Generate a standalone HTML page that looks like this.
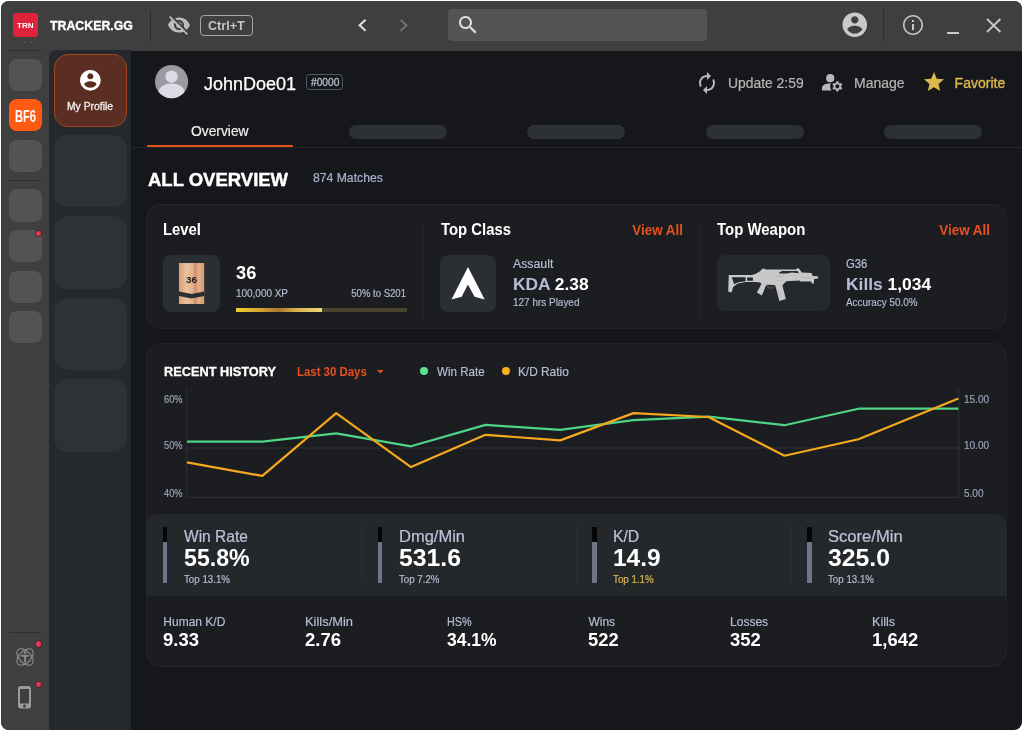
<!DOCTYPE html>
<html lang="en"><head><meta charset="utf-8"><title>Tracker.gg</title>
<style>
html,body{margin:0;padding:0;background:#fff;}
body{width:1023px;height:731px;position:relative;overflow:hidden;font-family:"Liberation Sans",sans-serif;}
#win{position:absolute;left:1px;top:1px;width:1021px;height:729px;border-radius:8px;overflow:hidden;background:#16171b;}
#in{position:absolute;left:-1px;top:-1px;width:1023px;height:731px;will-change:transform;}
.t{position:absolute;white-space:nowrap;line-height:1;}
.b{position:absolute;box-sizing:border-box;}
svg{position:absolute;overflow:visible;}
</style></head>
<body>
<div id="win"><div id="in">
<div class="b" style="left:0px;top:0px;width:1023px;height:50.9px;background:#3f3f3f;border-radius:0px;"></div>
<div class="b" style="left:0px;top:50px;width:60px;height:681px;background:#3f3f3f;border-radius:0px;"></div>
<div class="b" style="left:48.6px;top:49.7px;width:82.3px;height:682px;background:#24292d;border-radius:0px;border-top-left-radius:7px;"></div>
<div class="b" style="left:13px;top:13px;width:24.5px;height:24.3px;background:#e0233c;border-radius:3px;"></div>
<div class="t" style="top:22.00px;font-size:7.6px;color:#fff;left:17.10px;font-weight:700;transform:scaleX(1.063);transform-origin:left center;">TRN</div>
<div class="t" style="top:19.00px;font-size:13.4px;color:#fff;left:50.00px;font-weight:700;transform:scaleX(0.921);transform-origin:left center;-webkit-text-stroke:0.35px #fff;">TRACKER.GG</div>
<div class="b" style="left:150px;top:9.6px;width:1px;height:31.2px;background:#2b2b2b;border-radius:0px;"></div>
<div class="b" style="left:24px;top:42px;width:1px;height:1px;background:#6c6c6c;border-radius:0px;"></div>
<div class="b" style="left:31px;top:42px;width:1px;height:1px;background:#6c6c6c;border-radius:0px;"></div>
<svg style="left:167px;top:13px" width="24" height="24" viewBox="0 0 24 24"><path fill="#bdbdbd" d="M12 7c2.76 0 5 2.24 5 5 0 .65-.13 1.26-.36 1.83l2.92 2.92c1.51-1.26 2.7-2.89 3.43-4.75-1.73-4.39-6-7.5-11-7.5-1.4 0-2.74.25-3.98.7l2.16 2.16C10.740 7.13 11.35 7 12 7zM2 4.27l2.280 2.280.46.46C3.080 8.3 1.780 10.020 1 12c1.730 4.390 6 7.500 11 7.500 1.550 0 3.030-.3 4.380-.84l.42.42L19.730 22 21 20.730 3.270 3 2 4.270zM7.530 9.800l1.550 1.550c-.05.21-.08.43-.08.65 0 1.660 1.340 3 3 3 .22 0 .44-.03.65-.08l1.550 1.550c-.67.33-1.410.53-2.200.53-2.760 0-5-2.240-5-5 0-.79.2-1.530.53-2.200zm4.310-.78l3.150 3.150.02-.16c0-1.660-1.340-3-3-3l-.17.010z"/></svg>
<div class="b" style="left:199.5px;top:15.3px;width:53.6px;height:20.4px;background:transparent;border-radius:4px;border:1.2px solid #a6a6a6;"></div>
<div class="t" style="top:20.00px;font-size:12.2px;color:#c4c4c4;left:208.00px;font-weight:700;transform:scaleX(1.031);transform-origin:left center;">Ctrl+T</div>
<svg style="left:0;top:0" width="1023" height="60"><polyline points="365.6,19.8 359.6,25.3 365.6,30.8" fill="none" stroke="#e2e2e2" stroke-width="2"/><polyline points="400.6,19.8 406.4,25.3 400.6,30.8" fill="none" stroke="#767676" stroke-width="1.8"/></svg>
<div class="b" style="left:448.2px;top:9px;width:258.8px;height:32px;background:#545454;border-radius:4px;"></div>
<svg style="left:455.8px;top:13.4px" width="24" height="24" viewBox="0 0 24 24"><path fill="#e0e0e0" d="M15.5 14h-.79l-.28-.27C15.41 12.59 16 11.11 16 9.5 16 5.91 13.09 3 9.5 3S3 5.91 3 9.5 5.91 16 9.5 16c1.61 0 3.09-.59 4.23-1.57l.27.28v.79l5 4.99L20.49 19l-4.990-5zm-6 0C7.010 14 5 11.990 5 9.500S7.010 5 9.500 5 14 7.010 14 9.500 11.990 14 9.500 14z"/></svg>
<svg style="left:840.24px;top:10.44px" width="29.52" height="29.52" viewBox="0 0 24 24"><path fill="#c9c9c9" d="M12 2C6.48 2 2 6.48 2 12s4.48 10 10 10 10-4.48 10-10S17.52 2 12 2zm0 3c1.66 0 3 1.34 3 3s-1.34 3-3 3-3-1.34-3-3 1.34-3 3-3zm0 14.2c-2.5 0-4.71-1.28-6-3.220.03-1.990 4-3.080 6-3.080 1.990 0 5.970 1.090 6 3.080-1.290 1.940-3.500 3.220-6 3.220z"/></svg>
<div class="b" style="left:883px;top:8.8px;width:1px;height:32.4px;background:#2b2b2b;border-radius:0px;"></div>
<svg style="left:900.6px;top:13.3px" width="24" height="24" viewBox="0 0 24 24"><path fill="#c9c9c9" d="M11 17h2v-6h-2v6zm1-15C6.48 2 2 6.48 2 12s4.48 10 10 10 10-4.48 10-10S17.52 2 12 2zm0 18.400c-4.630 0-8.400-3.770-8.400-8.400s3.770-8.400 8.400-8.400 8.400 3.770 8.400 8.400-3.770 8.400-8.400 8.400zM11 9h2V7h-2v2z"/></svg>
<div class="b" style="left:947px;top:31.8px;width:12.4px;height:2px;background:#c9c9c9;border-radius:0px;"></div>
<svg style="left:0;top:0" width="1023" height="60"><path d="M987 19 L1000.4 32 M1000.4 19 L987 32" stroke="#c9c9c9" stroke-width="1.8" fill="none"/></svg>
<div class="b" style="left:9.2px;top:50px;width:32px;height:1px;background:#2d2d2d;border-radius:0px;"></div>
<div class="b" style="left:9.2px;top:58.5px;width:32.4px;height:32.4px;background:#535353;border-radius:8px;"></div>
<div class="b" style="left:9.2px;top:139.6px;width:32.4px;height:32.4px;background:#535353;border-radius:8px;"></div>
<div class="b" style="left:9.2px;top:189.4px;width:32.4px;height:32.4px;background:#535353;border-radius:8px;"></div>
<div class="b" style="left:9.2px;top:230.0px;width:32.4px;height:32.4px;background:#535353;border-radius:8px;"></div>
<div class="b" style="left:9.2px;top:270.8px;width:32.4px;height:32.4px;background:#535353;border-radius:8px;"></div>
<div class="b" style="left:9.2px;top:311.0px;width:32.4px;height:32.4px;background:#535353;border-radius:8px;"></div>
<div class="b" style="left:9.2px;top:99px;width:32.4px;height:32.4px;background:#ff5a14;border-radius:8px;"></div>
<div class="t" style="top:108.00px;font-size:17.2px;color:#fff;left:14.80px;font-weight:700;transform:scaleX(0.649);transform-origin:left center;">BF6</div>
<div class="b" style="left:9.2px;top:180.2px;width:32px;height:1px;background:#2d2d2d;border-radius:0px;"></div>
<div class="b" style="left:9.2px;top:632px;width:32px;height:1px;background:#2d2d2d;border-radius:0px;"></div>
<div class="b" style="left:34.699999999999996px;top:229.70000000000002px;width:7.4px;height:7.4px;background:#ea3556;border-radius:4px;border:1px solid #2a2a2a;"></div>
<div class="b" style="left:34.8px;top:640.1999999999999px;width:7.4px;height:7.4px;background:#ea3556;border-radius:4px;border:1px solid #2a2a2a;"></div>
<div class="b" style="left:34.8px;top:680.9px;width:7.4px;height:7.4px;background:#ea3556;border-radius:4px;border:1px solid #2a2a2a;"></div>
<svg style="left:13.3px;top:645px" width="24" height="24" viewBox="0 0 24 24" fill="none" stroke="#8c8c8c" stroke-width="1.1"><ellipse cx="12" cy="12" rx="10" ry="5.800" transform="rotate(45 12 12)"/><ellipse cx="12" cy="12" rx="10" ry="5.800" transform="rotate(-45 12 12)"/><circle cx="12" cy="12.600" r="6" stroke-width=".7" opacity=".7"/><path d="M8.800 10.800h6.400M12 10.800v5.600" stroke-width="1.900" stroke-linecap="round"/><circle cx="12" cy="7.800" r="1.200" fill="#8c8c8c" stroke="none"/></svg>
<svg style="left:13.2px;top:685.3px" width="24" height="24.5" viewBox="0 0 24 24" preserveAspectRatio="none"><path fill="#9b9b9b" d="M15.5 1h-8C6.120 1 5 2.120 5 3.500v17C5 21.880 6.120 23 7.500 23h8c1.380 0 2.500-1.120 2.500-2.500v-17C18 2.120 16.880 1 15.500 1zm-4 21c-.83 0-1.500-.67-1.500-1.500s.67-1.500 1.500-1.500 1.500.67 1.500 1.500-.67 1.500-1.500 1.500zm4.500-4H7V4h9v14z"/></svg>
<div class="b" style="left:53.7px;top:53.7px;width:73.2px;height:73.2px;background:#5b2e24;border-radius:14px;border:1.8px solid #a4441f;"></div>
<svg style="left:77.74px;top:67.74px" width="24.72" height="24.72" viewBox="0 0 24 24"><path fill="#fff" d="M12 2C6.48 2 2 6.48 2 12s4.48 10 10 10 10-4.48 10-10S17.52 2 12 2zm0 3c1.66 0 3 1.34 3 3s-1.34 3-3 3-3-1.34-3-3 1.34-3 3-3zm0 14.2c-2.5 0-4.71-1.28-6-3.220.03-1.990 4-3.080 6-3.080 1.990 0 5.970 1.090 6 3.080-1.290 1.940-3.500 3.220-6 3.220z"/></svg>
<div class="t" style="top:102.00px;font-size:10px;color:#f4eeec;left:67.40px;transform:scaleX(1.035);transform-origin:left center;-webkit-text-stroke:0.3px #f4eeec;">My Profile</div>
<div class="b" style="left:54px;top:134.7px;width:73px;height:72.5px;background:#2e3136;border-radius:14px;"></div>
<div class="b" style="left:54px;top:216.2px;width:73px;height:72.5px;background:#2e3136;border-radius:14px;"></div>
<div class="b" style="left:54px;top:297.7px;width:73px;height:72.5px;background:#2e3136;border-radius:14px;"></div>
<div class="b" style="left:54px;top:379.2px;width:73px;height:72.5px;background:#2e3136;border-radius:14px;"></div>
<svg style="left:154.6px;top:65.4px" width="33.2" height="33.2" viewBox="0 0 33.2 33.2"><defs><clipPath id="av"><circle cx="16.6" cy="16.6" r="16.6"/></clipPath></defs><circle cx="16.6" cy="16.6" r="16.6" fill="#9a9aa3"/><g clip-path="url(#av)" fill="#dcdce6"><circle cx="16.6" cy="11.7" r="6.2"/><path d="M3.200 30c0-7.500 4.800-11.400 13.400-11.400s13.400 3.900 13.400 11.400v6H3.200z"/></g></svg>
<div class="t" style="top:75.00px;font-size:18px;color:#fff;left:203.90px;-webkit-text-stroke:0.25px #fff;">JohnDoe01</div>
<div class="b" style="left:306px;top:74.3px;width:37.2px;height:16px;background:transparent;border-radius:3.5px;border:1px solid #525a68;"></div>
<div class="t" style="top:78.00px;font-size:10px;color:#b4bccb;left:310.50px;transform:scaleX(1.021);transform-origin:left center;-webkit-text-stroke:0.3px #b4bccb;">#0000</div>
<svg style="left:695.1px;top:71px" width="24" height="24" viewBox="0 0 24 24"><path fill="#b8b8b8" d="M12 6v3l4-4-4-4v3c-4.420 0-8 3.580-8 8 0 1.570.46 3.030 1.240 4.260L6.700 14.800c-.45-.83-.7-1.790-.7-2.800 0-3.310 2.690-6 6-6zm6.760 1.740L17.300 9.200c.44.84.7 1.790.7 2.800 0 3.310-2.690 6-6 6v-3l-4 4 4 4v-3c4.420 0 8-3.580 8-8 0-1.570-.46-3.030-1.240-4.260z"/></svg>
<div class="t" style="top:76.00px;font-size:14px;color:#b6b6b6;left:728.00px;transform:scaleX(0.991);transform-origin:left center;-webkit-text-stroke:0.22px #b6b6b6;">Update 2:59</div>
<svg style="left:820.3px;top:70px" width="24.5" height="24.5" viewBox="0 0 24 24"><g fill="#b8b8b8"><circle cx="10" cy="8" r="4"/><path d="M10.670 13.020C10.450 13.010 10.230 13 10 13c-2.420 0-4.680.67-6.610 1.820C2.510 15.340 2 16.320 2 17.350V20h9.260C10.470 18.870 10 17.490 10 16c0-1.070.25-2.070.67-2.980z"/><path d="M20.750 16c0-.22-.03-.42-.06-.63l1.140-1.010-1-1.730-1.450.49c-.32-.27-.68-.48-1.080-.63L18 11h-2l-.3 1.490c-.4.15-.76.36-1.080.63l-1.450-.49-1 1.730 1.140 1.010c-.03.21-.06.41-.06.630s.03.42.06.63l-1.140 1.010 1 1.730 1.450-.49c.32.27.68.48 1.080.63L16 21h2l.3-1.490c.4-.15.76-.36 1.080-.63l1.450.49 1-1.730-1.140-1.010c.03-.21.06-.41.06-.63zM17 18c-1.100 0-2-.9-2-2s.9-2 2-2 2 .9 2 2-.9 2-2 2z"/></g></svg>
<div class="t" style="top:76.00px;font-size:14px;color:#b6b6b6;left:854.00px;-webkit-text-stroke:0.22px #b6b6b6;">Manage</div>
<svg style="left:921.6px;top:69.6px" width="24" height="24" viewBox="0 0 24 24"><path fill="#dcb94f" d="M12 17.270L18.180 21l-1.640-7.030L22 9.240l-7.190-.61L12 2 9.190 8.630 2 9.240l5.460 4.730L5.820 21z"/></svg>
<div class="t" style="top:76.00px;font-size:14px;color:#dcb94f;left:954.60px;-webkit-text-stroke:0.35px #dcb94f;">Favorite</div>
<div class="b" style="left:131px;top:146.7px;width:892px;height:1px;background:#25262b;border-radius:0px;"></div>
<div class="t" style="top:124.00px;font-size:14px;color:#f0f0f0;left:191.00px;transform:scaleX(0.987);transform-origin:left center;-webkit-text-stroke:0.2px #f0f0f0;">Overview</div>
<div class="b" style="left:147px;top:144.6px;width:145.8px;height:2.4px;background:#e8501e;border-radius:1px;"></div>
<div class="b" style="left:348.9px;top:124.5px;width:98.2px;height:14.2px;background:#2d3035;border-radius:7.1px;"></div>
<div class="b" style="left:527.3px;top:124.5px;width:98.2px;height:14.2px;background:#2d3035;border-radius:7.1px;"></div>
<div class="b" style="left:705.7px;top:124.5px;width:98.2px;height:14.2px;background:#2d3035;border-radius:7.1px;"></div>
<div class="b" style="left:884.1px;top:124.5px;width:98.2px;height:14.2px;background:#2d3035;border-radius:7.1px;"></div>
<div class="t" style="top:170.00px;font-size:19px;color:#fff;left:147.60px;font-weight:700;transform:scaleX(0.973);transform-origin:left center;-webkit-text-stroke:0.45px #fff;">ALL OVERVIEW</div>
<div class="t" style="top:172.00px;font-size:12.2px;color:#a9b4d0;left:313.00px;-webkit-text-stroke:0.18px #a9b4d0;">874 Matches</div>
<div class="b" style="left:146px;top:203.6px;width:861px;height:125.3px;background:#1c1d21;border-radius:14px;border:1px solid #24252a;"></div>
<div class="b" style="left:422.6px;top:219px;width:1px;height:106px;background:#222328;border-radius:0px;"></div>
<div class="b" style="left:699.6px;top:219px;width:1px;height:106px;background:#222328;border-radius:0px;"></div>
<div class="t" style="top:222.00px;font-size:15.6px;color:#fff;left:163.30px;font-weight:700;transform:scaleX(0.948);transform-origin:left center;">Level</div>
<div class="t" style="top:222.00px;font-size:15.6px;color:#fff;left:440.50px;font-weight:700;transform:scaleX(0.954);transform-origin:left center;">Top Class</div>
<div class="t" style="top:222.00px;font-size:15.6px;color:#fff;left:716.90px;font-weight:700;transform:scaleX(0.959);transform-origin:left center;">Top Weapon</div>
<div class="t" style="top:223.00px;font-size:14px;color:#e8501e;right:340.30px;font-weight:700;transform:scaleX(0.956);transform-origin:right center;">View All</div>
<div class="t" style="top:223.00px;font-size:14px;color:#e8501e;right:33.50px;font-weight:700;transform:scaleX(0.956);transform-origin:right center;">View All</div>
<div class="b" style="left:163.2px;top:255.1px;width:56.8px;height:57.1px;background:#2b2e33;border-radius:8px;"></div>
<svg style="left:179px;top:263.1px" width="25.2" height="41" viewBox="0 0 25.2 41"><defs><linearGradient id="cu" x1="0" y1="0" x2="1" y2="0"><stop offset="0" stop-color="#d7a079"/><stop offset=".3" stop-color="#ebc09e"/><stop offset=".55" stop-color="#e3b18c"/><stop offset=".64" stop-color="#c9906a"/><stop offset=".78" stop-color="#e2b08a"/><stop offset="1" stop-color="#d39c74"/></linearGradient></defs><rect x="0" y="0" width="25.2" height="41" fill="url(#cu)"/><path d="M0 28.400 L12.600 31.100 L25.200 28.400 L25.200 32.900 L12.600 35.600 L0 32.900Z" fill="#2a2d32"/></svg>
<div class="t" style="top:276.00px;font-size:8.6px;color:#1c1613;left:186.00px;font-weight:700;transform:scaleX(1.15);transform-origin:left center;">36</div>
<div class="t" style="top:264.00px;font-size:18px;color:#fff;left:236.30px;font-weight:700;transform:scaleX(1.014);transform-origin:left center;">36</div>
<div class="t" style="top:289.00px;font-size:10.3px;color:#b4bdd4;left:236.30px;transform:scaleX(0.966);transform-origin:left center;-webkit-text-stroke:0.18px #b4bdd4;">100,000 XP</div>
<div class="t" style="top:289.00px;font-size:10.3px;color:#b4bdd4;right:616.80px;transform:scaleX(0.927);transform-origin:right center;-webkit-text-stroke:0.18px #b4bdd4;">50% to S201</div>
<div class="b" style="left:236.3px;top:307.7px;width:171.1px;height:4.3px;background:#4a452f;border-radius:0px;"></div>
<div class="b" style="left:236.3px;top:307.7px;width:85.5px;height:4.3px;background:linear-gradient(90deg,#f0cf2c 0%,#d9a82e 25%,#a9772f 50%,#d8b24a 70%,#ecd87c 100%);border-radius:0px;"></div>
<div class="b" style="left:439.7px;top:255.1px;width:56.5px;height:57.1px;background:#2b2e33;border-radius:8px;"></div>
<svg style="left:439.8px;top:255.1px" width="56.6" height="56.6" viewBox="439.8 255.1 56.6 56.6"><path d="M467.800 267 L484.500 299.600 L474.400 296.900 L467.700 284.700 L461.500 296.900 L451.300 299.600Z" fill="#fff"/></svg>
<div class="t" style="top:258.00px;font-size:12px;color:#b4bdd4;left:513.00px;transform:scaleX(1.024);transform-origin:left center;-webkit-text-stroke:0.18px #b4bdd4;">Assault</div>
<div class="t" style="top:276.00px;font-size:17.4px;color:#fff;left:513.00px;font-weight:700;"><span style="color:#b4bdd4">KDA</span> 2.38</div>
<div class="t" style="top:297.00px;font-size:10.7px;color:#b4bdd4;left:513.00px;transform:scaleX(0.932);transform-origin:left center;-webkit-text-stroke:0.18px #b4bdd4;">127 hrs Played</div>
<div class="b" style="left:716.9px;top:255.1px;width:112.8px;height:56.4px;background:#25282c;border-radius:8px;"></div>
<svg style="left:722px;top:260px" width="102" height="46" viewBox="0 0 1023 461"><path fill="#c8c8c8" fill-rule="evenodd" d="M68 150 L300 150 L340 138 L385 110 L395 95 L418 84 L440 95 L745 95 L755 80 L770 85 L788 108 L800 125 L898 130 L910 160 L962 164 L965 186 L925 190 L920 236 L905 240 L895 216 L790 216 L775 206 L645 214 L622 236 L606 256 L640 390 L575 410 L540 276 L532 250 L450 247 L440 258 L400 356 L350 326 L395 240 L385 226 L330 220 L240 220 L160 236 L112 270 L96 326 L62 316 Z M98 172 L236 172 L236 212 L165 222 L122 242 Z M252 176 L310 176 L310 208 L252 208 Z M572 128 L600 110 L758 110 L770 132 L700 124 L650 134 L575 136 Z"/><g stroke="#aeaeae" stroke-width="5" fill="none"><path d="M520 165 H625 M545 205 H615 M795 178 H900 M560 300 L590 385"/></g><path d="M453 250 L463 279 L506 281 L530 260" stroke="#77797c" stroke-width="7" fill="none"/></svg>
<div class="t" style="top:258.00px;font-size:12px;color:#b4bdd4;left:846.00px;transform:scaleX(0.943);transform-origin:left center;-webkit-text-stroke:0.18px #b4bdd4;">G36</div>
<div class="t" style="top:276.00px;font-size:17.4px;color:#fff;left:846.00px;font-weight:700;"><span style="color:#b4bdd4">Kills</span> 1,034</div>
<div class="t" style="top:297.00px;font-size:10.7px;color:#b4bdd4;left:846.00px;transform:scaleX(0.925);transform-origin:left center;-webkit-text-stroke:0.18px #b4bdd4;">Accuracy 50.0%</div>
<div class="b" style="left:146px;top:343px;width:861px;height:324.3px;background:#1c1d21;border-radius:14px;border:1px solid #24252a;overflow:hidden;"></div>
<div class="t" style="top:365.00px;font-size:13.2px;color:#fff;left:164.00px;font-weight:700;transform:scaleX(0.967);transform-origin:left center;-webkit-text-stroke:0.3px #fff;">RECENT HISTORY</div>
<div class="t" style="top:367.00px;font-size:11.9px;color:#e8501e;left:296.80px;font-weight:700;transform:scaleX(0.959);transform-origin:left center;">Last 30 Days</div>
<svg style="left:376.6px;top:370px" width="7" height="4"><path d="M0 0H6.600L3.300 3.400Z" fill="#e8501e"/></svg>
<div class="b" style="left:420.3px;top:366.5px;width:8.2px;height:8.2px;background:#5fe08c;border-radius:5px;"></div>
<div class="t" style="top:367.00px;font-size:11.9px;color:#b4bdd4;left:437.10px;transform:scaleX(0.973);transform-origin:left center;-webkit-text-stroke:0.18px #b4bdd4;">Win Rate</div>
<div class="b" style="left:501.5px;top:366.5px;width:8.2px;height:8.2px;background:#f9b21e;border-radius:5px;"></div>
<div class="t" style="top:367.00px;font-size:11.9px;color:#b4bdd4;left:517.90px;-webkit-text-stroke:0.18px #b4bdd4;">K/D Ratio</div>
<div class="t" style="top:394.00px;font-size:10.5px;color:#9aa3b8;left:163.80px;transform:scaleX(0.885);transform-origin:left center;-webkit-text-stroke:0.18px #9aa3b8;">60%</div>
<div class="t" style="top:440.00px;font-size:10.5px;color:#9aa3b8;left:163.80px;transform:scaleX(0.885);transform-origin:left center;-webkit-text-stroke:0.18px #9aa3b8;">50%</div>
<div class="t" style="top:488.00px;font-size:10.5px;color:#9aa3b8;left:163.80px;transform:scaleX(0.885);transform-origin:left center;-webkit-text-stroke:0.18px #9aa3b8;">40%</div>
<div class="t" style="top:394.00px;font-size:10.5px;color:#9aa3b8;left:964.00px;transform:scaleX(0.951);transform-origin:left center;-webkit-text-stroke:0.18px #9aa3b8;">15.00</div>
<div class="t" style="top:440.00px;font-size:10.5px;color:#9aa3b8;left:964.00px;transform:scaleX(0.951);transform-origin:left center;-webkit-text-stroke:0.18px #9aa3b8;">10.00</div>
<div class="t" style="top:488.00px;font-size:10.5px;color:#9aa3b8;left:964.00px;transform:scaleX(0.954);transform-origin:left center;-webkit-text-stroke:0.18px #9aa3b8;">5.00</div>
<svg style="left:0;top:0" width="1023" height="731"><g fill="none"><path d="M186.700 388.800V497.300H958.700V388.800M186.700 448H958.700" stroke="#303237" stroke-width="1"/><polyline points="187,441.6 262.3,441.6 336.2,433.4 411,446.3 485.5,424.9 560.2,429.9 633.5,420.2 708.5,416.7 784.5,425.2 858.4,408.7 958.4,408.7" stroke="#4fd486" stroke-width="2.200" stroke-linejoin="round"/><polyline points="187,462.4 262.3,475.9 336.2,413.1 411,467.1 485.5,434.8 560.2,440.4 633.5,413.1 708.5,417.0 784.5,455.7 858.4,439.2 958.4,398.5" stroke="#f5a91c" stroke-width="2.200" stroke-linejoin="round"/></g></svg>
<div class="b" style="left:146px;top:513.7px;width:861px;height:82.3px;background:#25282b;border-radius:0px;border-top-left-radius:13px;border-top-right-radius:13px;"></div>
<div class="b" style="left:162.7px;top:526.8px;width:4.6px;height:16px;background:#060606;border-radius:0px;"></div>
<div class="b" style="left:162.7px;top:542.4px;width:4.6px;height:40.6px;background:#6f7589;border-radius:0px;"></div>
<div class="t" style="top:529.00px;font-size:16px;color:#b9c2d9;left:183.80px;transform:scaleX(0.97);transform-origin:left center;-webkit-text-stroke:0.22px #b9c2d9;">Win Rate</div>
<div class="t" style="top:547.00px;font-size:23.5px;color:#fff;left:183.80px;font-weight:700;transform:scaleX(0.986);transform-origin:left center;">55.8%</div>
<div class="t" style="top:575.00px;font-size:10px;color:#b4bdd4;left:183.80px;transform:scaleX(0.973);transform-origin:left center;-webkit-text-stroke:0.18px #b4bdd4;">Top 13.1%</div>
<div class="b" style="left:377.5px;top:526.8px;width:4.6px;height:16px;background:#060606;border-radius:0px;"></div>
<div class="b" style="left:377.5px;top:542.4px;width:4.6px;height:40.6px;background:#6f7589;border-radius:0px;"></div>
<div class="t" style="top:529.00px;font-size:16px;color:#b9c2d9;left:398.60px;transform:scaleX(1.031);transform-origin:left center;-webkit-text-stroke:0.22px #b9c2d9;">Dmg/Min</div>
<div class="t" style="top:547.00px;font-size:23.5px;color:#fff;left:398.60px;font-weight:700;transform:scaleX(1.054);transform-origin:left center;">531.6</div>
<div class="t" style="top:575.00px;font-size:10px;color:#b4bdd4;left:398.60px;transform:scaleX(0.971);transform-origin:left center;-webkit-text-stroke:0.18px #b4bdd4;">Top 7.2%</div>
<div class="b" style="left:592.3px;top:526.8px;width:4.6px;height:16px;background:#060606;border-radius:0px;"></div>
<div class="b" style="left:592.3px;top:542.4px;width:4.6px;height:40.6px;background:#6f7589;border-radius:0px;"></div>
<div class="t" style="top:529.00px;font-size:16px;color:#b9c2d9;left:613.40px;transform:scaleX(0.982);transform-origin:left center;-webkit-text-stroke:0.22px #b9c2d9;">K/D</div>
<div class="t" style="top:547.00px;font-size:23.5px;color:#fff;left:613.40px;font-weight:700;transform:scaleX(1.039);transform-origin:left center;">14.9</div>
<div class="t" style="top:575.00px;font-size:10px;color:#d9b650;left:613.40px;transform:scaleX(0.976);transform-origin:left center;-webkit-text-stroke:0.18px #d9b650;">Top 1.1%</div>
<div class="b" style="left:807.1px;top:526.8px;width:4.6px;height:16px;background:#060606;border-radius:0px;"></div>
<div class="b" style="left:807.1px;top:542.4px;width:4.6px;height:40.6px;background:#6f7589;border-radius:0px;"></div>
<div class="t" style="top:529.00px;font-size:16px;color:#b9c2d9;left:828.20px;transform:scaleX(1.036);transform-origin:left center;-webkit-text-stroke:0.22px #b9c2d9;">Score/Min</div>
<div class="t" style="top:547.00px;font-size:23.5px;color:#fff;left:828.20px;font-weight:700;transform:scaleX(1.054);transform-origin:left center;">325.0</div>
<div class="t" style="top:575.00px;font-size:10px;color:#b4bdd4;left:828.20px;transform:scaleX(0.973);transform-origin:left center;-webkit-text-stroke:0.18px #b4bdd4;">Top 13.1%</div>
<div class="b" style="left:361px;top:526px;width:1px;height:57px;background:#2a2d31;border-radius:0px;"></div>
<div class="b" style="left:576px;top:526px;width:1px;height:57px;background:#2a2d31;border-radius:0px;"></div>
<div class="b" style="left:791px;top:526px;width:1px;height:57px;background:#2a2d31;border-radius:0px;"></div>
<div class="t" style="top:616.00px;font-size:12px;color:#b4bdd4;left:163.30px;-webkit-text-stroke:0.18px #b4bdd4;">Human K/D</div>
<div class="t" style="top:632.00px;font-size:17.6px;color:#fff;left:163.30px;font-weight:700;transform:scaleX(1.051);transform-origin:left center;">9.33</div>
<div class="t" style="top:616.00px;font-size:12px;color:#b4bdd4;left:305.00px;transform:scaleX(1.074);transform-origin:left center;-webkit-text-stroke:0.18px #b4bdd4;">Kills/Min</div>
<div class="t" style="top:632.00px;font-size:17.6px;color:#fff;left:305.00px;font-weight:700;transform:scaleX(1.051);transform-origin:left center;">2.76</div>
<div class="t" style="top:616.00px;font-size:12px;color:#b4bdd4;left:446.70px;transform:scaleX(0.9);transform-origin:left center;-webkit-text-stroke:0.18px #b4bdd4;">HS%</div>
<div class="t" style="top:632.00px;font-size:17.6px;color:#fff;left:446.70px;font-weight:700;transform:scaleX(0.992);transform-origin:left center;">34.1%</div>
<div class="t" style="top:616.00px;font-size:12px;color:#b4bdd4;left:588.40px;-webkit-text-stroke:0.18px #b4bdd4;">Wins</div>
<div class="t" style="top:632.00px;font-size:17.6px;color:#fff;left:588.40px;font-weight:700;transform:scaleX(1.045);transform-origin:left center;">522</div>
<div class="t" style="top:616.00px;font-size:12px;color:#b4bdd4;left:730.10px;-webkit-text-stroke:0.18px #b4bdd4;">Losses</div>
<div class="t" style="top:632.00px;font-size:17.6px;color:#fff;left:730.10px;font-weight:700;transform:scaleX(1.049);transform-origin:left center;">352</div>
<div class="t" style="top:616.00px;font-size:12px;color:#b4bdd4;left:871.80px;transform:scaleX(1.05);transform-origin:left center;-webkit-text-stroke:0.18px #b4bdd4;">Kills</div>
<div class="t" style="top:632.00px;font-size:17.6px;color:#fff;left:871.80px;font-weight:700;transform:scaleX(1.049);transform-origin:left center;">1,642</div>
</div></div>
</body></html>
